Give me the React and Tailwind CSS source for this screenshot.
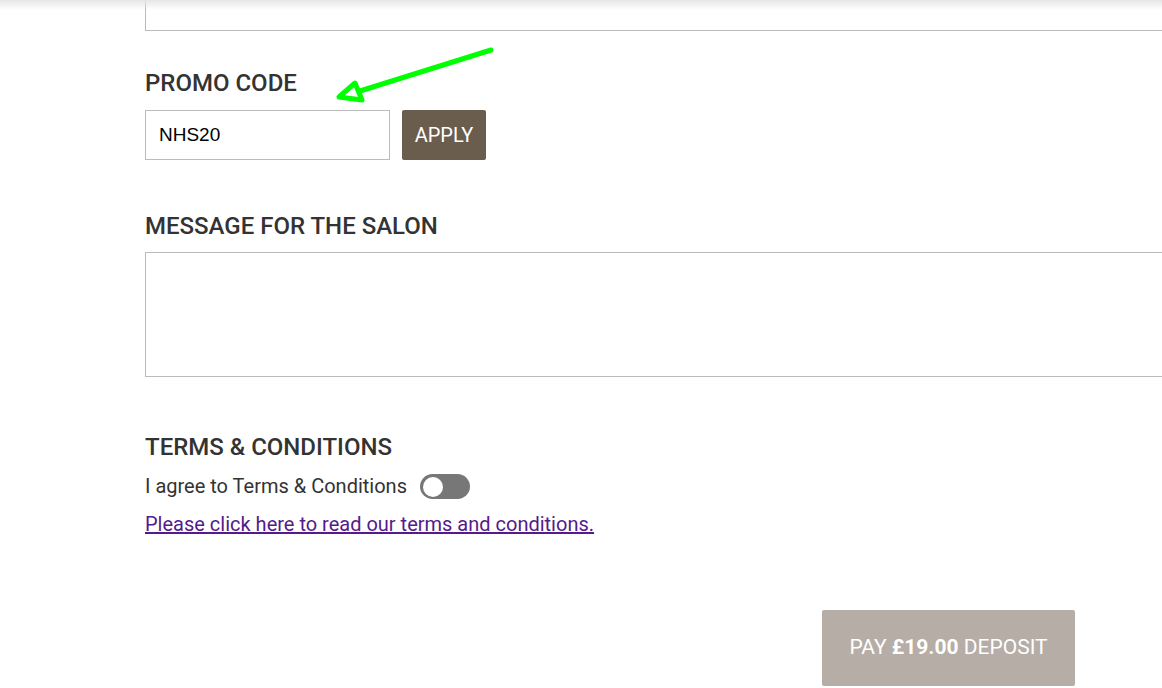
import { useState } from "react";

// ======================================
// SMALL PIECES
// ======================================

function Heading({ children, className = "" }) {
  return (
    <h2
      className={`text-[24px] leading-[28px] font-medium text-[#333333] ${className}`}
    >
      {children}
    </h2>
  );
}

function Toggle({ on, onChange }) {
  return (
    <button
      type="button"
      onClick={() => onChange(!on)}
      className={`relative flex h-[25px] w-[50px] items-center rounded-full px-[3px] ${
        on ? "bg-[#6b5d4e] justify-end" : "bg-[#777777] justify-start"
      }`}
    >
      <span className="block h-[20px] w-[20px] rounded-full bg-white" />
    </button>
  );
}

// annotation arrow drawn on top of the screenshot
function GreenArrow() {
  return (
    <svg
      className="pointer-events-none absolute left-0 top-0"
      width="1162"
      height="688"
    >
      <g
        fill="none"
        stroke="#00ff00"
        strokeWidth="5"
        strokeLinecap="round"
        strokeLinejoin="round"
      >
        <line x1="491" y1="50" x2="360" y2="91" />
        <polygon points="355,83 339,97 362,100" />
      </g>
    </svg>
  );
}

export default function App() {
  const [promo, setPromo] = useState("NHS20");
  const [message, setMessage] = useState("");
  const [agree, setAgree] = useState(false);

  return (
    <div
      className="relative min-h-[688px] w-[1162px] overflow-hidden bg-white"
      style={{ fontFamily: "Roboto, 'Liberation Sans', sans-serif" }}
    >
      {/* header shadow */}
      <div className="absolute left-0 top-0 h-[10px] w-full bg-gradient-to-b from-[#e6e6e6] to-white/0" />

      <div className="pl-[145px]">
        {/* previous field, scrolled up */}
        <div className="h-[31px] w-[1100px] border-b border-l border-[#bbbbbb]" />

        {/* PROMO CODE */}
        <Heading className="mt-[38px]">PROMO CODE</Heading>

        <div className="mt-[13px] flex gap-[12px]">
          <input
            value={promo}
            onChange={(e) => setPromo(e.target.value)}
            className="h-[50px] w-[245px] border border-[#bbbbbb] px-[13px] text-[19px] text-black outline-none"
            style={{ fontFamily: "'Liberation Sans', Arial, sans-serif" }}
          />
          <button className="h-[50px] w-[84px] rounded-[2px] bg-[#6b5d4e] text-[20px] text-white">
            APPLY
          </button>
        </div>

        {/* MESSAGE */}
        <Heading className="mt-[52px]">MESSAGE FOR THE SALON</Heading>

        <textarea
          value={message}
          onChange={(e) => setMessage(e.target.value)}
          className="mt-[12px] block h-[125px] w-[1100px] resize-none border border-[#bbbbbb] outline-none"
        />

        {/* TERMS */}
        <Heading className="mt-[56px]">TERMS &amp; CONDITIONS</Heading>

        <div className="mt-[13px] flex items-center gap-[13px]">
          <span className="text-[20px] leading-[25px] text-[#333333]">
            I agree to Terms &amp; Conditions
          </span>
          <Toggle on={agree} onChange={setAgree} />
        </div>

        <a
          href="#"
          className="mt-[13px] block w-fit text-[20px] leading-[24px] text-[#551a8b] underline"
        >
          Please click here to read our terms and conditions.
        </a>

        {/* PAY */}
        <div className="mt-[74px] flex">
          <button className="ml-[677px] h-[76px] w-[253px] rounded-[2px] bg-[#b5ada6] text-[21px] text-white">
            PAY <span className="font-bold">£19.00</span> DEPOSIT
          </button>
        </div>
      </div>

      <GreenArrow />
    </div>
  );
}
